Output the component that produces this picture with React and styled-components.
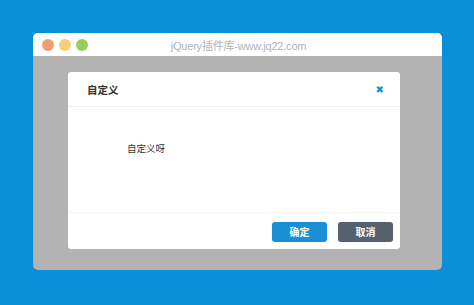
import React from 'react'
import styled, { createGlobalStyle } from 'styled-components'

const Global = createGlobalStyle`
  html, body {
    margin: 0;
    padding: 0;
    background: #0a90d8;
    font-family: "Liberation Sans", "Noto Sans CJK SC", sans-serif;
  }
`

const Page = styled.div`
  width: 474px;
  height: 305px;
  padding: 33px 0 0 33px;
  box-sizing: border-box;
`

const Window = styled.div`
  width: 409px;
  height: 237px;
  border-radius: 5px;
  overflow: hidden;
  display: flex;
  flex-direction: column;
  background: #b3b3b3;
`

const TitleBar = styled.div`
  height: 23px;
  background: #fff;
  display: flex;
  align-items: center;
  position: relative;
  padding-left: 9px;
`

const Dot = styled.span`
  width: 12px;
  height: 12px;
  border-radius: 50%;
  background: ${p => p.color};
  margin-right: 5px;
  margin-top: 1px;
`

const TitleText = styled.div`
  position: absolute;
  left: 0;
  right: 0;
  text-align: center;
  font-size: 11px;
  letter-spacing: -0.2px;
  color: #aeb3b8;
  padding-left: 2px;
  padding-top: 1px;
`

const Stage = styled.div`
  flex: 1;
  padding: 16px 0 0 35px;
`

const Dialog = styled.div`
  width: 332px;
  height: 177px;
  background: #fff;
  border-radius: 3px;
  display: flex;
  flex-direction: column;
`

const Header = styled.div`
  height: 34px;
  border-bottom: 1px solid #eeeeee;
  display: flex;
  align-items: center;
  justify-content: space-between;
  padding: 0 16px 0 19px;
  font-family: "Noto Sans CJK SC", sans-serif;
  font-size: 10.5px;
  font-weight: bold;
  color: #333;
`

const Close = styled.span`
  color: #1a8fd5;
  font-size: 10px;
  font-family: "DejaVu Sans", sans-serif;
  font-weight: bold;
`

const Body = styled.div`
  height: 106px;
  border-bottom: 1px solid #f3f3f3;
  padding: 34px 0 0 59px;
  box-sizing: border-box;
  font-family: "Noto Sans CJK SC", sans-serif;
  font-size: 9.5px;
  color: #333;
`

const Footer = styled.div`
  flex: 1;
  display: flex;
  align-items: center;
  justify-content: flex-end;
  gap: 11px;
  padding-right: 7px;
  padding-top: 1px;
`

const Button = styled.button`
  width: 55px;
  height: 20px;
  border: none;
  border-radius: 3px;
  background: ${p => (p.primary ? '#1b8fd4' : '#56616d')};
  color: #fff;
  font-family: "Noto Sans CJK SC", sans-serif;
  font-size: 10px;
  font-weight: bold;
  padding: 0;
`

export default function App() {
  return (
    <Page>
      <Global />
      <Window>
        <TitleBar>
          <Dot color="#f39b70" />
          <Dot color="#f6cf74" />
          <Dot color="#96cd5c" />
          <TitleText>jQuery插件库-www.jq22.com</TitleText>
        </TitleBar>
        <Stage>
          <Dialog>
            <Header>
              <span>自定义</span>
              <Close>✖</Close>
            </Header>
            <Body>自定义呀</Body>
            <Footer>
              <Button primary>确定</Button>
              <Button>取消</Button>
            </Footer>
          </Dialog>
        </Stage>
      </Window>
    </Page>
  )
}
